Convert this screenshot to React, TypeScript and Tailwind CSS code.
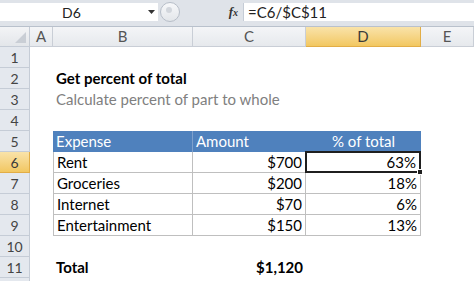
import React from 'react';

const font = { fontFamily: 'Lato, "Open Sans", sans-serif' };

const cols = ['A', 'B', 'C', 'D', 'E'];

function RowHead({ n, active }: { n?: number; active?: boolean }) {
  return (
    <div
      className={`flex items-center justify-center border-b border-r text-[14px] ${
        active
          ? 'bg-gradient-to-b from-[#f9e3a9] to-[#f2c760] border-[#e2ad46] text-[#3a3a3a]'
          : 'bg-[#e4e8ee] border-[#c5ccd6] text-[#444]'
      }`}
    >
      {n}
    </div>
  );
}

function Cell({ children, className = '' }: { children?: React.ReactNode; className?: string }) {
  return <div className={`flex items-center overflow-visible whitespace-nowrap text-[15px] ${className}`}>{children}</div>;
}

const rows = [
  { name: 'Rent', amt: '$700', pct: '63%' },
  { name: 'Groceries', amt: '$200', pct: '18%' },
  { name: 'Internet', amt: '$70', pct: '6%' },
  { name: 'Entertainment', amt: '$150', pct: '13%' },
];

export default function App() {
  return (
    <div className="w-[474px] h-[281px] overflow-hidden bg-white text-black" style={font}>
      {/* Formula bar */}
      <div className="h-[27px] bg-[#dfe3e9] border-b border-[#b9c1cc] pt-[3px]">
        <div className="flex h-[18px]">
          <div className="w-[158px] bg-white flex items-center relative text-[14px] text-[#222]">
            <span className="ml-[62px]">D6</span>
            <svg className="absolute left-[148px] top-[7px]" width="7" height="4" viewBox="0 0 7 4">
              <path d="M0 0h7L3.5 4z" fill="#333" />
            </svg>
          </div>
          <div className="w-[85px] flex items-center relative">
            <div className="absolute left-[2px] top-[-1px] w-[20px] h-[20px] rounded-full border border-[#b7bec8] bg-gradient-to-b from-[#f7f8fa] to-[#e3e6ea]" />
            <div className="absolute left-[8px] top-[4px] w-[6px] h-[6px] rounded-full bg-[#d2d6dc]" />
            <span className="ml-auto mr-[5px] text-[13px] italic font-bold text-[#333]" style={{ fontFamily: '"Liberation Serif", serif' }}>
              f<span className="text-[10px]">x</span>
            </span>
          </div>
          <div className="flex-1 bg-white border-l border-[#c5ccd6] flex items-center pl-[4px] text-[15px] text-[#222]">
            =C6/$C$11
          </div>
        </div>
      </div>

      {/* Grid */}
      <div className="grid grid-cols-[30px_23px_140px_113px_115px_53px] grid-rows-[20px_repeat(12,21px)]">
        {/* header row */}
        <div className="bg-gradient-to-b from-[#f3f4f6] to-[#e3e6ea] border-r border-b border-[#c5ccd6] relative">
          <svg className="absolute right-[3px] bottom-[3px]" width="11" height="11" viewBox="0 0 11 11">
            <path d="M11 0V11H0z" fill="#c9ced5" />
          </svg>
        </div>
        {cols.map((c) => (
          <div
            key={c}
            className={`flex items-center justify-center border-r border-b text-[15px] ${
              c === 'D'
                ? 'bg-gradient-to-b from-[#f9e3a9] to-[#f2c760] border-[#e2ad46] text-[#3a3a3a]'
                : 'bg-gradient-to-b from-[#f4f5f7] to-[#e6e9ed] border-[#c9ced6] text-[#555]'
            }`}
          >
            {c}
          </div>
        ))}

        {/* row 1 */}
        <RowHead n={1} />
        <Cell /><Cell /><Cell /><Cell /><Cell />

        {/* row 2 */}
        <RowHead n={2} />
        <Cell />
        <Cell className="pl-[3px] font-bold">Get percent of total</Cell>
        <Cell /><Cell /><Cell />

        {/* row 3 */}
        <RowHead n={3} />
        <Cell />
        <Cell className="pl-[3px] text-[#808080]">Calculate percent of part to whole</Cell>
        <Cell /><Cell /><Cell />

        {/* row 4 */}
        <RowHead n={4} />
        <Cell /><Cell /><Cell /><Cell /><Cell />

        {/* row 5: table header */}
        <RowHead n={5} />
        <Cell />
        <Cell className="bg-[#4f81bd] text-white pl-[3px] border-r border-[#7ea0cc]">Expense</Cell>
        <Cell className="bg-[#4f81bd] text-white pl-[3px]">Amount</Cell>
        <Cell className="bg-[#4f81bd] text-white justify-center">% of total</Cell>
        <Cell />

        {rows.map((r, i) => (
          <React.Fragment key={r.name}>
            <RowHead n={6 + i} active={i === 0} />
            <Cell />
            <Cell className="pl-[3px] border-l border-r border-b border-[#bfbfbf]">{r.name}</Cell>
            <Cell className="justify-end pr-[3px] border-r border-b border-[#bfbfbf]">{r.amt}</Cell>
            {i === 0 ? (
              <div className="relative flex items-center justify-end pr-[3px] text-[15px] border-2 border-[#1f1f1f] -ml-[1px] -mt-[1px] h-[22px]">
                {r.pct}
                <div className="absolute right-[-4px] bottom-[-4px] w-[6px] h-[6px] bg-[#1f1f1f] border border-white" />
              </div>
            ) : (
              <Cell className="justify-end pr-[3px] border-r border-b border-[#bfbfbf]">{r.pct}</Cell>
            )}
            <Cell />
          </React.Fragment>
        ))}

        {/* row 10 */}
        <RowHead n={10} />
        <Cell /><Cell /><Cell /><Cell /><Cell />

        {/* row 11 */}
        <RowHead n={11} />
        <Cell />
        <Cell className="pl-[3px] font-bold">Total</Cell>
        <Cell className="justify-end pr-[3px] font-bold">$1,120</Cell>
        <Cell /><Cell />

        {/* row 12, only its top edge shows */}
        <RowHead />
        <Cell /><Cell /><Cell /><Cell /><Cell />
      </div>
    </div>
  );
}
